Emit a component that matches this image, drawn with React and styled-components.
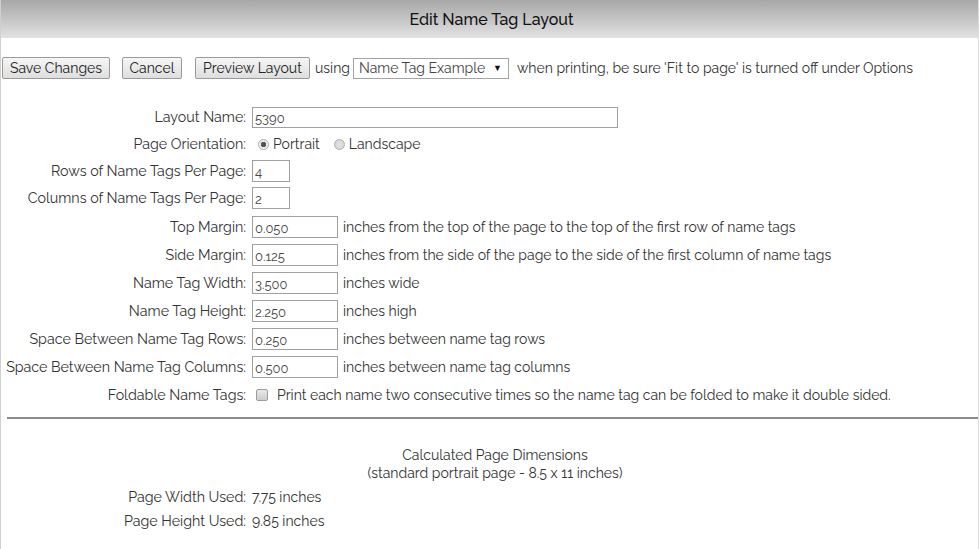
import React from "react";
import styled, { createGlobalStyle } from "styled-components";

const Global = createGlobalStyle`
  html, body { margin: 0; padding: 0; background: #fff; }
  body { font-family: "Raleway", "Lato", "Open Sans", sans-serif; color: #333; font-size: 14px; }
`;

const Page = styled.div`
  width: 979px;
  min-height: 549px;
  box-sizing: border-box;
  border-left: 1px solid #cfcfcf;
  border-right: 1px solid #dcdcdc;
`;

const Header = styled.div`
  height: 38px;
  display: flex;
  align-items: center;
  justify-content: center;
  background: linear-gradient(#a7a7a7, #e2e2e2);
  font-size: 16px;
  font-weight: 500;
  color: #111;
  padding-left: 4px;
`;

const Toolbar = styled.div`
  display: flex;
  align-items: center;
  height: 22px;
  margin-top: 19px;
  padding-left: 1px;
`;

const Button = styled.button`
  font-family: inherit;
  font-size: 14px;
  color: #222;
  width: ${(p) => p.$w}px;
  height: 22px;
  padding: 0;
  margin-right: ${(p) => p.$gap || 0}px;
  background: linear-gradient(#f6f6f6, #dedede);
  border: 1px solid #9a9a9a;
  border-radius: 2px;
  line-height: 20px;
`;

const Text = styled.span`
  margin: 0 ${(p) => p.$r || 0}px 0 ${(p) => p.$l || 0}px;
  white-space: nowrap;
`;

const SelectBox = styled.div`
  width: 156px;
  height: 21px;
  box-sizing: border-box;
  border: 1px solid #a3a3a3;
  display: flex;
  align-items: center;
  justify-content: space-between;
  padding: 0 6px 0 5px;
  font-size: 14px;
  color: #444;
`;

const Arrow = styled.span`
  font-size: 9px;
  color: #111;
`;

const Form = styled.div`
  margin-top: ${(p) => p.$top || 0}px;
  display: flex;
  flex-direction: column;
  gap: ${(p) => p.$gap || 6}px;
`;

const Row = styled.div`
  display: grid;
  grid-template-columns: 248px 1fr;
  align-items: center;
  min-height: ${(p) => p.$h || 22}px;
`;

const Label = styled.div`
  text-align: right;
  padding-right: 3px;
  white-space: nowrap;
  font-size: 14.25px;
`;

const Field = styled.div`
  display: flex;
  align-items: center;
  padding-left: 3px;
  white-space: nowrap;
`;

const Input = styled.input`
  width: ${(p) => p.$w}px;
  height: ${(p) => p.$h || 22}px;
  box-sizing: border-box;
  border: 1px solid #a0a0a0;
  font-family: inherit;
  font-size: 13px;
  color: #444;
  padding: 2px 2px 0;
  margin-right: 5px;
  outline: none;
`;

const Radio = styled.span`
  width: 11px;
  height: 11px;
  border-radius: 50%;
  border: 1px solid #b0b0b0;
  background: radial-gradient(circle, ${(p) => (p.$on ? "#555 0 2.5px, #eee 3px" : "#e4e4e4 0, #d0d0d0 100%")});
  margin: 0 4px 0 ${(p) => p.$l || 5}px;
  box-sizing: border-box;
`;

const RadioLabel = styled.span`
  margin-right: ${(p) => p.$r || 0}px;
`;

const Check = styled.span`
  width: 12px;
  height: 12px;
  box-sizing: border-box;
  border: 1px solid #9c9c9c;
  border-radius: 2px;
  background: linear-gradient(#e8e8e8, #cdcdcd);
  margin: 0 9px 0 4px;
`;

const Rule = styled.hr`
  margin: 11px 0 0 6px;
  border: none;
  border-top: 2px solid #8a8a8a;
`;

const Summary = styled.div`
  margin-top: 27px;
  text-align: center;
  line-height: 18px;
  font-size: 14px;
  padding-left: 11px;
`;

const rowsA = [
  { label: "Rows of Name Tags Per Page:", value: "4", w: 38 },
  { label: "Columns of Name Tags Per Page:", value: "2", w: 38 },
];

const rowsB = [
  { label: "Top Margin:", value: "0.050", note: "inches from the top of the page to the top of the first row of name tags" },
  { label: "Side Margin:", value: "0.125", note: "inches from the side of the page to the side of the first column of name tags" },
  { label: "Name Tag Width:", value: "3.500", note: "inches wide" },
  { label: "Name Tag Height:", value: "2.250", note: "inches high" },
  { label: "Space Between Name Tag Rows:", value: "0.250", note: "inches between name tag rows" },
  { label: "Space Between Name Tag Columns:", value: "0.500", note: "inches between name tag columns" },
];

export default function App() {
  return (
    <Page>
      <Global />
      <Header>Edit Name Tag Layout</Header>
      <Toolbar>
        <Button $w={108} $gap={12}>Save Changes</Button>
        <Button $w={60} $gap={13}>Cancel</Button>
        <Button $w={115}>Preview Layout</Button>
        <Text $l={5} $r={3}>using</Text>
        <SelectBox>
          <span>Name Tag Example</span>
          <Arrow>▼</Arrow>
        </SelectBox>
        <Text $l={8}>when printing, be sure 'Fit to page' is turned off under Options</Text>
      </Toolbar>
      <Form $top={27} $gap={5}>
        <Row>
          <Label>Layout Name:</Label>
          <Field><Input $w={366} $h={21} defaultValue="5390" /></Field>
        </Row>
        <Row>
          <Label>Page Orientation:</Label>
          <Field>
            <Radio $on $l={6} />
            <RadioLabel $r={9}>Portrait</RadioLabel>
            <Radio $l={0} />
            <span>Landscape</span>
          </Field>
        </Row>
        {rowsA.map((r) => (
          <Row key={r.label}>
            <Label>{r.label}</Label>
            <Field><Input $w={r.w} defaultValue={r.value} /></Field>
          </Row>
        ))}
      </Form>
      <Form $top={7} $gap={6}>
        {rowsB.map((r) => (
          <Row key={r.label}>
            <Label>{r.label}</Label>
            <Field>
              <Input $w={86} defaultValue={r.value} />
              <span>{r.note}</span>
            </Field>
          </Row>
        ))}
        <Row>
          <Label>Foldable Name Tags:</Label>
          <Field>
            <Check />
            <span>Print each name two consecutive times so the name tag can be folded to make it double sided.</span>
          </Field>
        </Row>
      </Form>
      <Rule />
      <Summary>
        <div>Calculated Page Dimensions</div>
        <div>(standard portrait page - 8.5 x 11 inches)</div>
      </Summary>
      <Form $top={5} $gap={4}>
        <Row $h={20}>
          <Label>Page Width Used:</Label>
          <Field>7.75 inches</Field>
        </Row>
        <Row $h={20}>
          <Label>Page Height Used:</Label>
          <Field>9.85 inches</Field>
        </Row>
      </Form>
    </Page>
  );
}
